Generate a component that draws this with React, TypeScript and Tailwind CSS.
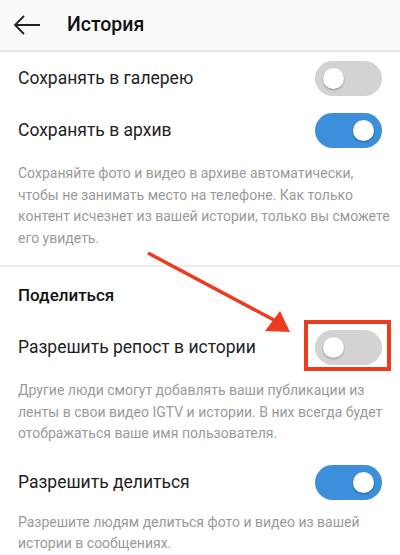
import React from "react";

function Toggle({ on }: { on: boolean }) {
  return (
    <div
      className={
        "w-[67px] h-[35px] rounded-full flex items-center px-[8px] shrink-0 " +
        (on ? "bg-[#3d8fdb] justify-end" : "bg-[#d3d3d3] justify-start")
      }
    >
      <div className="w-[21px] h-[21px] rounded-full bg-white shadow-[0_1px_2px_rgba(0,0,0,0.35)]" />
    </div>
  );
}

function Row({ label, on, h }: { label: string; on: boolean; h: string }) {
  return (
    <div className={"flex items-center justify-between pl-[18px] pr-[18px] " + h}>
      <span className="text-[17.5px] text-[#222]">{label}</span>
      <Toggle on={on} />
    </div>
  );
}

function Desc({ lines, cls }: { lines: string[]; cls: string }) {
  return (
    <div className={"pl-[18px] pr-[10px] text-[14px] leading-[21.5px] text-[#9a9a9a] " + cls}>
      {lines.map((l, i) => (
        <div key={i} className="whitespace-nowrap">
          {l}
        </div>
      ))}
    </div>
  );
}

export default function App() {
  return (
    <div
      className="relative w-[400px] h-[555px] bg-white overflow-hidden"
      style={{ fontFamily: "Roboto, 'Noto Sans', sans-serif" }}
    >
      <div className="h-[52px] bg-[#fafafa] border-b-[2px] border-[#e6e6e6] flex items-center">
        <svg width="28" height="20" viewBox="0 0 28 20" className="ml-[13px]">
          <path d="M27 10H2M11 1L2 10l9 9" fill="none" stroke="#222" strokeWidth="1.8" />
        </svg>
        <span className="ml-[26px] text-[19.5px] font-medium text-[#111]">История</span>
      </div>
      <Row label="Сохранять в галерею" on={false} h="h-[52px]" />
      <Row label="Сохранять в архив" on={true} h="h-[52px]" />
      <Desc
        cls="pt-[7px] pb-[16px]"
        lines={[
          "Сохраняйте фото и видео в архиве автоматически,",
          "чтобы не занимать место на телефоне. Как только",
          "контент исчезнет из вашей истории, только вы сможете",
          "его увидеть.",
        ]}
      />
      <div className="h-[2px] bg-[#ededed]" />
      <div className="h-[54px] flex items-center pl-[18px] pt-[4px] text-[17px] font-medium text-[#111]">
        Поделиться
      </div>
      <Row label="Разрешить репост в истории" on={false} h="h-[52px]" />
      <Desc
        cls="pt-[7px] pb-[12px]"
        lines={[
          "Другие люди смогут добавлять ваши публикации из",
          "ленты в свои видео IGTV и истории. В них всегда будет",
          "отображаться ваше имя пользователя.",
        ]}
      />
      <Row label="Разрешить делиться" on={true} h="h-[52px]" />
      <Desc
        cls="pt-[3px]"
        lines={["Разрешите людям делиться фото и видео из вашей", "истории в сообщениях."]}
      />
      <div className="absolute left-[304px] top-[320px] w-[87px] h-[51px] border-[4px] border-[#ef3b1d]" />
      <svg className="absolute left-0 top-0" width="400" height="555" viewBox="0 0 400 555">
        <line x1="148" y1="253" x2="274" y2="320" stroke="#ef3b1d" strokeWidth="3.5" />
        <polygon points="290,332 265,331 280,311" fill="#ef3b1d" />
      </svg>
    </div>
  );
}
